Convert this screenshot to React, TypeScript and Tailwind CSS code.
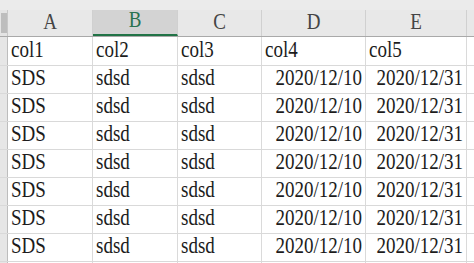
import React from "react";

const cols = [
  { letter: "A", w: "w-[85px]", align: "left" },
  { letter: "B", w: "w-[85px]", align: "left" },
  { letter: "C", w: "w-[84px]", align: "left" },
  { letter: "D", w: "w-[104px]", align: "right" },
  { letter: "E", w: "w-[101px]", align: "right" },
];

const header = ["col1", "col2", "col3", "col4", "col5"];
const dataRow = ["SDS", "sdsd", "sdsd", "2020/12/10", "2020/12/31"];
const emptyRow = ["", "", "", "", ""];

function Txt({ children }: { children: React.ReactNode }) {
  return (
    <span className="inline-block origin-bottom scale-y-125 leading-none">{children}</span>
  );
}

export default function App() {
  const rows = [header, ...Array.from({ length: 7 }, () => dataRow), emptyRow];
  return (
    <div
      className="w-[474px] h-[263px] overflow-hidden bg-white text-[19px] text-[#1c1c1c]"
      style={{ fontFamily: '"Liberation Serif", "Times New Roman", serif' }}
    >
      {/* column header */}
      <div className="flex flex-col h-[37px] bg-[#e8e8e8] border-b border-[#a9a9a9]">
        <div className="h-[10px] shrink-0 bg-[#ebebeb]" />
        <div className="flex flex-1">
          <div className="w-[8px] shrink-0 border-r border-[#c8c8c8] bg-[#e4e4e4] flex items-end justify-end pb-[3px]">
            <div className="w-[6px] h-[20px] bg-[#bdbdbd]" />
          </div>
          {cols.map((c) => (
            <div
              key={c.letter}
              className={`${c.w} shrink-0 border-r border-[#d0d0d0] flex items-end justify-center pb-[3px] ${
                c.letter === "B"
                  ? "bg-[#d3d3d3] border-b-2 border-b-[#217346] text-[#2a7250]"
                  : "text-[#444444]"
              }`}
            >
              <Txt>{c.letter}</Txt>
            </div>
          ))}
          <div className="flex-1" />
        </div>
      </div>
      {rows.map((r, ri) => (
        <div
          key={ri}
          className={`flex ${ri === 0 ? "h-[29px]" : "h-[28px]"} border-b border-[#d9d9d9]`}
        >
          <div className="w-[8px] shrink-0 bg-[#e6e6e6] border-r border-[#bdbdbd]" />
          {cols.map((c, ci) => (
            <div
              key={ci}
              className={`${c.w} shrink-0 border-r border-[#dadada] flex items-end pb-[4px] px-[3px] whitespace-nowrap ${
                c.align === "right" && ri > 0 ? "justify-end" : "justify-start"
              }`}
            >
              {r[ci] ? <Txt>{r[ci]}</Txt> : null}
            </div>
          ))}
          <div className="flex-1" />
        </div>
      ))}
    </div>
  );
}
